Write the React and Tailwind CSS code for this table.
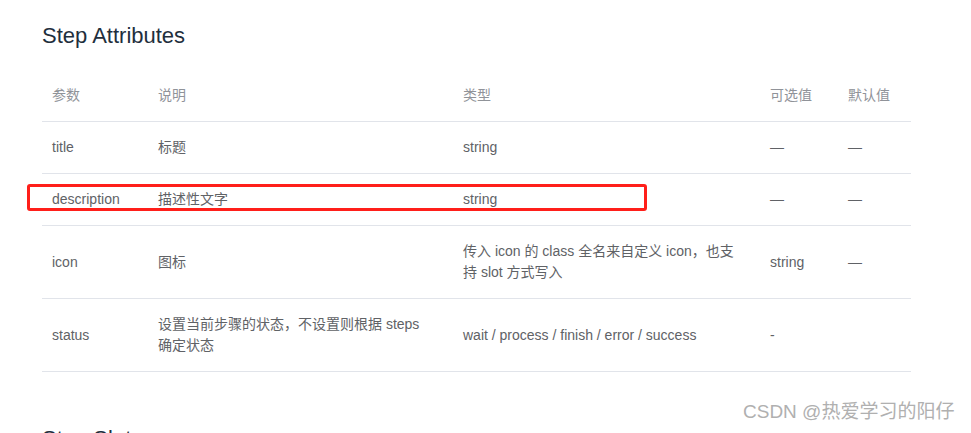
const rows = [
  { name: "title", desc: "标题", type: "string", options: "—", def: "—" },
  { name: "description", desc: "描述性文字", type: "string", options: "—", def: "—" },
  {
    name: "icon",
    desc: "图标",
    type: (
      <>
        传入 icon 的 class 全名来自定义 icon，也支
        <br />
        持 slot 方式写入
      </>
    ),
    options: "string",
    def: "—",
  },
  {
    name: "status",
    desc: (
      <>
        设置当前步骤的状态，不设置则根据 steps
        <br />
        确定状态
      </>
    ),
    type: "wait / process / finish / error / success",
    options: "-",
    def: "",
  },
];

const font = {
  fontFamily: '"Liberation Sans", Arial, "Noto Sans CJK SC", sans-serif',
};

export default function App() {
  return (
    <div
      className="relative h-[433px] w-[971px] overflow-hidden bg-white pl-[42px] pt-[23px]"
      style={font}
    >
      <h3 className="mb-[22px] text-[22px] font-normal leading-[25px] text-[#1f2f3d]">
        Step Attributes
      </h3>

      <div className="relative w-[869px]">
        <table className="w-[869px] table-fixed border-collapse text-[14px] leading-[21px]">
          <colgroup>
            <col className="w-[106px]" />
            <col className="w-[305px]" />
            <col className="w-[307px]" />
            <col className="w-[78px]" />
            <col className="w-[73px]" />
          </colgroup>
          <thead>
            <tr className="border-b border-[#e1e4ea] text-left text-[#909399]">
              <th className="px-[10px] py-[15px] font-normal">参数</th>
              <th className="px-[10px] py-[15px] font-normal">说明</th>
              <th className="px-[10px] py-[15px] font-normal">类型</th>
              <th className="px-[10px] py-[15px] font-normal">可选值</th>
              <th className="px-[10px] py-[15px] font-normal">默认值</th>
            </tr>
          </thead>
          <tbody className="text-[#606266]">
            {rows.map((r) => (
              <tr key={r.name} className="border-b border-[#e1e4ea]">
                <td className="px-[10px] py-[15px] align-middle">{r.name}</td>
                <td className="px-[10px] py-[15px] align-middle">{r.desc}</td>
                <td className="px-[10px] py-[15px] align-middle">{r.type}</td>
                <td className="px-[10px] py-[15px] align-middle">{r.options}</td>
                <td className="px-[10px] py-[15px] align-middle">{r.def}</td>
              </tr>
            ))}
          </tbody>
        </table>

        {/* annotation box around the description row */}
        <div className="pointer-events-none absolute left-[-15px] top-[114px] h-[27px] w-[620px] rounded-[3px] border-[3px] border-[#ff1f1a]" />
      </div>

      <h3 className="mt-[54px] text-[22px] font-normal leading-[25px] text-[#1f2f3d]">
        Step Slot
      </h3>

      <div className="absolute left-[743px] top-[400px] text-[19px] leading-[24px] text-[#b0b0b0]">
        CSDN @热爱学习的阳仔
      </div>
    </div>
  );
}
